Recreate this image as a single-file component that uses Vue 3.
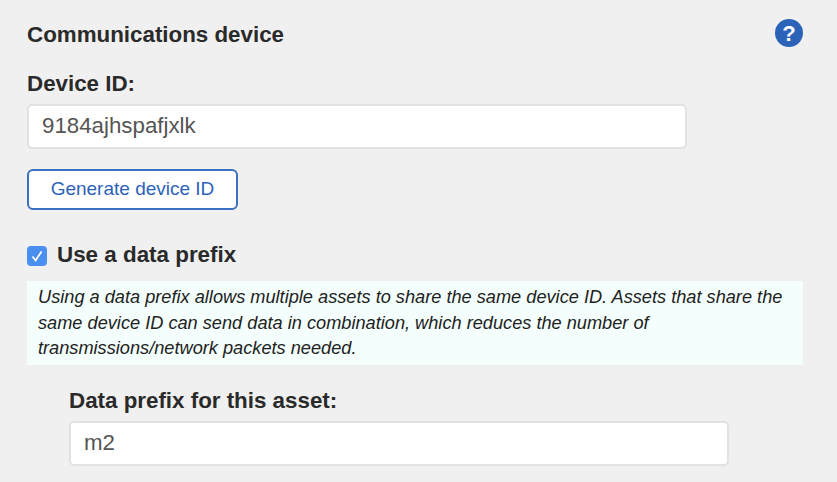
<script setup>
const deviceId = '9184ajhspafjxlk'
const prefix = 'm2'
</script>

<template>
  <main class="panel">
    <header class="head">
      <h2 class="title">Communications device</h2>
      <svg class="help" viewBox="0 0 28 28" aria-label="Help">
        <circle cx="14" cy="14" r="14" fill="#2b63b9" />
        <text x="14" y="21.5" text-anchor="middle" class="help-mark">?</text>
      </svg>
    </header>
    <label class="label">Device ID:</label>
    <input class="field wide" :value="deviceId" />
    <button class="btn">Generate device ID</button>
    <label class="check-row">
      <span class="box">
        <svg viewBox="0 0 20 20" width="20" height="20">
          <path d="M5.5 10.5 L8.6 14.5 L14.5 5.5" fill="none" stroke="#fff" stroke-width="1.8" />
        </svg>
      </span>
      <span class="check-text">Use a data prefix</span>
    </label>
    <p class="note">Using a data prefix allows multiple assets to share the same device ID. Assets that share the same device ID can send data in combination, which reduces the number of transmissions/network packets needed.</p>
    <section class="nested">
      <label class="label">Data prefix for this asset:</label>
      <input class="field wide" :value="prefix" />
    </section>
  </main>
</template>

<style>
html, body { margin: 0; background: #f0f0f0; overflow: hidden; }
</style>

<style scoped>
.panel {
  box-sizing: border-box;
  width: 837px;
  height: 482px;
  padding: 20px 34px 0 27px;
  background: #f0f0f0;
  color: #2a2a2a;
  font-family: "Liberation Sans", Arial, sans-serif;
  overflow: hidden;
}
.head { display: flex; justify-content: space-between; align-items: flex-start; height: 30px; }
.title { margin: 0; font-size: 22.35px; font-weight: 700; line-height: 30px; }
.help { width: 28px; height: 28px; margin-top: -1px; }
.help-mark { fill: #fff; font-family: "Liberation Sans", sans-serif; font-weight: 700; font-size: 22px; }
.label { display: block; margin-top: 21px; font-size: 22.35px; font-weight: 700; line-height: 26px; }
.field {
  display: block;
  box-sizing: border-box;
  width: 660px;
  height: 45px;
  margin-top: 7px;
  padding: 0 13px 2px;
  border: 2px solid #e2e2e2;
  border-radius: 5px;
  background: #fff;
  color: #555;
  font: 22.3px "Liberation Sans", Arial, sans-serif;
  outline: none;
}
.btn {
  display: block;
  box-sizing: border-box;
  width: 211px;
  height: 41px;
  margin-top: 20px;
  padding: 0 0 2px;
  border: 2px solid #3a70c2;
  border-radius: 6px;
  background: #fff;
  color: #2b63b9;
  font: 19px "Liberation Sans", Arial, sans-serif;
}
.check-row { display: flex; align-items: center; gap: 10px; margin-top: 30px; height: 30px; }
.box {
  width: 20px;
  height: 20px;
  margin-top: 2px;
  border-radius: 4px;
  background: #4a8ff0;
  display: block;
}
.box svg { display: block; }
.check-text { font-size: 22.4px; font-weight: 700; }
.note {
  margin: 11px 0 0;
  padding: 4px 11px 0;
  height: 84px;
  background: #f4fffd;
  font-size: 18.2px;
  font-style: italic;
  line-height: 25.6px;
  color: #222;
  width: 776px;
  box-sizing: border-box;
}
.nested { padding-left: 42px; }
.nested .label { margin-top: 23px; }
</style>
